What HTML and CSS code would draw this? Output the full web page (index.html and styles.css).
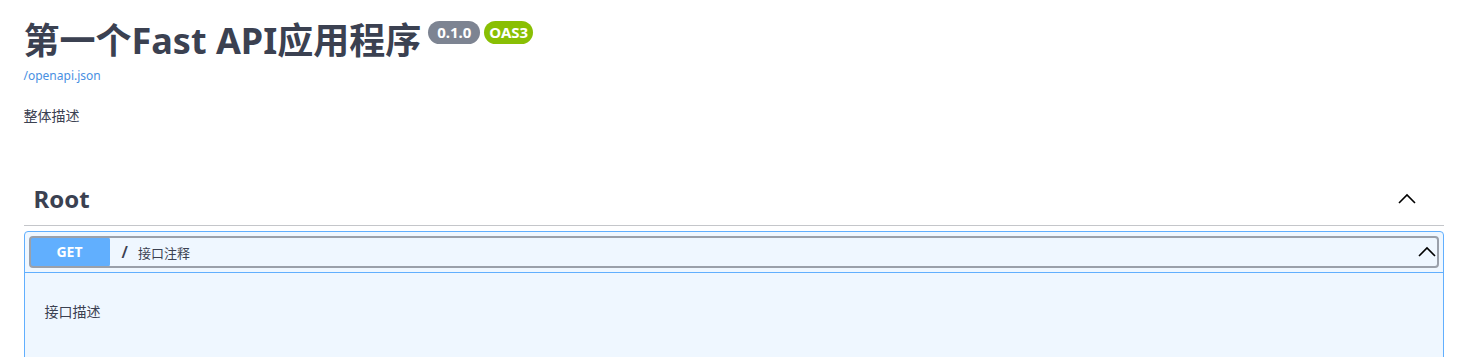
FILE: index.html
```html
<!DOCTYPE html>
<html lang="zh-CN">
<head>
    <meta charset="UTF-8">
    <meta name="viewport" content="width=device-width, initial-scale=1.0">
    <title>第一个Fast API应用程序 - Swagger UI</title>
    <link rel="stylesheet" href="styles.css">
</head>
<body>
    <div class="wrapper">
        <div class="info">
            <h2 class="title">第一个Fast API应用程序<span class="badge version">0.1.0</span><span class="badge oas">OAS3</span></h2>
            <a class="link" href="#">/openapi.json</a>
            <div class="description">整体描述</div>
        </div>

        <div class="tag-section">
            <h3 class="opblock-tag">
                <span class="tag-name">Root</span>
                <button class="expand" type="button" aria-label="collapse">
                    <svg width="20" height="20" viewBox="0 0 20 20"><polyline points="2,14 10,6 18,14" fill="none" stroke="#000" stroke-width="1.6"/></svg>
                </button>
            </h3>

            <div class="opblock opblock-get">
                <div class="opblock-summary">
                    <div class="summary-control">
                        <span class="method">GET</span>
                        <span class="path">/</span>
                        <span class="summary-text">接口注释</span>
                        <svg class="arrow" width="20" height="20" viewBox="0 0 20 20"><polyline points="2,14 10,6 18,14" fill="none" stroke="#000" stroke-width="1.6"/></svg>
                    </div>
                </div>
                <div class="opblock-body">
                    <p class="opblock-description">接口描述</p>
                </div>
            </div>
        </div>
    </div>
</body>
</html>
```

FILE: styles.css
```css
body {
    margin: 0;
    background-color: #fff;
    font-family: "Noto Sans", "Noto Sans CJK SC", sans-serif;
    color: #3b4151;
}
.wrapper {
    max-width: 1460px;
    margin: 0 auto;
    padding: 0 20px;
    box-sizing: border-box;
}
.info {
    margin: 15px 0 47px;
}
.title {
    margin: 0;
    font-size: 36px;
    font-weight: bold;
    line-height: 52px;
    color: #3b4151;
}
.badge {
    display: inline-block;
    position: relative;
    top: -12px;
    vertical-align: middle;
    padding: 1px 9px;
    margin-left: 4px;
    border-radius: 57px;
    font-size: 15px;
    line-height: 21px;
    font-weight: bold;
    color: #fff;
}
.badge.version {
    background-color: #7d8492;
    margin-left: 7px;
}
.badge.oas {
    background-color: #89bf04;
    padding: 1px 5px;
}
.link {
    display: block;
    margin-top: 0;
    font-size: 12px;
    line-height: 18px;
    color: #4990e2;
    text-decoration: none;
}
.description {
    margin-top: 21px;
    font-size: 14px;
    line-height: 20px;
}
.opblock-tag {
    display: flex;
    align-items: center;
    margin: 0 0 5px;
    padding: 10px 20px 10px 10px;
    border-bottom: 1px solid rgba(59, 65, 81, 0.3);
    font-size: 24px;
    line-height: 32px;
}
.tag-name {
    flex: 1;
}
.expand {
    border: none;
    background: none;
    padding: 0 7px 0 0;
    display: flex;
}
.opblock {
    margin: 0 0 15px;
    border: 1px solid #61affe;
    border-radius: 4px;
    background-color: rgba(97, 175, 254, 0.1);
}
.opblock-summary {
    padding: 5px;
    border-bottom: 1px solid #61affe;
}
.summary-control {
    display: flex;
    align-items: center;
    outline: 2px solid #9aa0aa;
    outline-offset: -1px;
    border-radius: 3px;
}
.method {
    width: 80px;
    height: 30px;
    line-height: 30px;
    text-align: center;
    background-color: #61affe;
    border-radius: 3px;
    color: #fff;
    font-size: 14px;
    font-weight: bold;
}
.path {
    padding: 0 10px 0 12px;
    font-size: 16px;
    font-weight: 600;
}
.summary-text {
    flex: 1;
    font-size: 13px;
}
.arrow {
    margin-right: 1px;
}
.opblock-body {
    padding: 15px 20px;
    min-height: 80px;
}
.opblock-description {
    margin: 14px 0;
    font-size: 14px;
    line-height: 20px;
}
```
